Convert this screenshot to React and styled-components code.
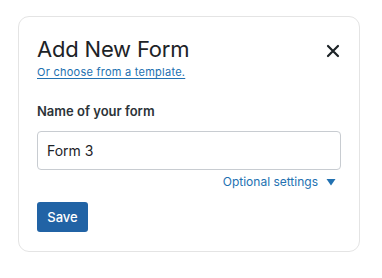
import styled, { createGlobalStyle } from 'styled-components';

const GlobalStyle = createGlobalStyle`
  body {
    margin: 0;
    background: #ffffff;
    font-family: Inter, "Noto Sans", sans-serif;
    color: #1d2327;
  }
`;

const Page = styled.div`
  padding: 16px 22px 0 18px;
`;

const Card = styled.div`
  box-sizing: border-box;
  width: 342px;
  height: 236px;
  border: 1px solid #e4e4e4;
  border-radius: 11px;
  padding: 18px 18px 0 18px;
`;

const Header = styled.div`
  display: flex;
  justify-content: space-between;
  align-items: flex-start;
`;

const Title = styled.h1`
  margin: 0;
  font-size: 22px;
  font-weight: 400;
  line-height: 28px;
  color: #1d2327;
  letter-spacing: -0.2px;
`;

const TemplateLink = styled.a`
  display: block;
  margin-top: 2px;
  font-size: 11px;
  line-height: 14px;
  letter-spacing: 0.25px;
  color: #2271b1;
  text-decoration: underline;
  text-underline-offset: 2px;
  cursor: pointer;
`;

const Close = styled.button`
  border: none;
  background: none;
  padding: 0;
  margin: 9px 1px 0 0;
  width: 14px;
  height: 14px;
  display: flex;
  cursor: pointer;
`;

const Label = styled.label`
  display: block;
  margin-top: 24px;
  font-size: 13px;
  font-weight: 600;
  line-height: 16px;
  color: #2c3338;
`;

const Input = styled.input`
  box-sizing: border-box;
  display: block;
  width: 304px;
  height: 39px;
  margin-top: 12px;
  padding: 0 9px;
  border: 1px solid #c8ccd1;
  border-radius: 4px;
  font-family: inherit;
  font-size: 14px;
  color: #1d2327;
  outline: none;
`;

const Optional = styled.div`
  display: flex;
  justify-content: flex-end;
  align-items: center;
  gap: 8px;
  width: 304px;
  margin-top: 4px;
  font-size: 12px;
  line-height: 16px;
  color: #2271b1;
  padding-right: 5px;
  box-sizing: border-box;
`;

const SaveButton = styled.button`
  display: block;
  margin-top: 12px;
  width: 51px;
  height: 30px;
  border: none;
  border-radius: 3px;
  background: #2163a5;
  color: #ffffff;
  font-family: inherit;
  font-size: 13px;
  font-weight: 500;
  cursor: pointer;
`;

export default function App() {
  return (
    <>
      <GlobalStyle />
      <Page>
        <Card>
          <Header>
            <div>
              <Title>Add New Form</Title>
              <TemplateLink>Or choose from a template.</TemplateLink>
            </div>
            <Close aria-label="Close">
              <svg width="14" height="14" viewBox="0 0 14 14">
                <path d="M2 2L12 12M12 2L2 12" stroke="#1d2327" strokeWidth="2.2" strokeLinecap="round" />
              </svg>
            </Close>
          </Header>
          <Label>Name of your form</Label>
          <Input defaultValue="Form 3" />
          <Optional>
            <span>Optional settings</span>
            <svg width="10" height="8" viewBox="0 0 10 8">
              <path d="M0.5 1H9.5L5 7.5Z" fill="#2271b1" />
            </svg>
          </Optional>
          <SaveButton>Save</SaveButton>
        </Card>
      </Page>
    </>
  );
}
